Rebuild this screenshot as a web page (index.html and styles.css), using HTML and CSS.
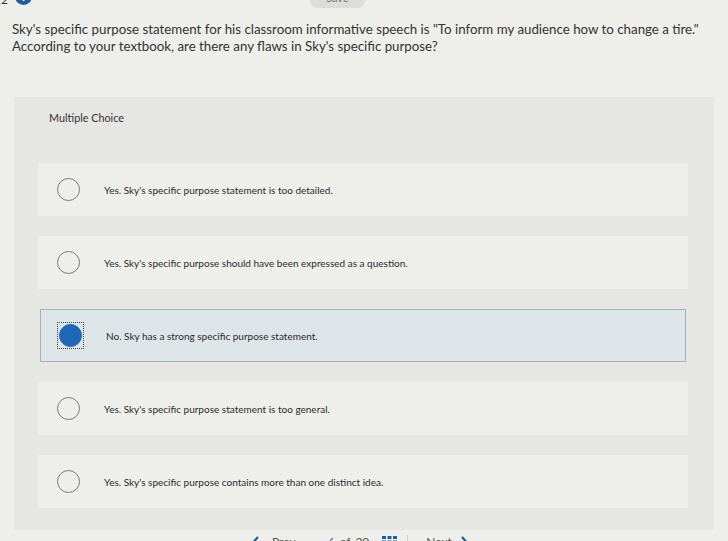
FILE: index.html
```html
<!DOCTYPE html>
<html lang="en">
<head>
<meta charset="utf-8">
<link rel="stylesheet" href="styles.css">
</head>
<body>
<div class="topbar">
  <span class="qnum">12</span>
  <span class="info">i</span>
  <span class="save">Save</span>
</div>
<div class="question">
  <p>Sky's specific purpose statement for his classroom informative speech is "To inform my audience how to change a tire."</p>
  <p>According to your textbook, are there any flaws in Sky's specific purpose?</p>
</div>
<div class="mc">
  <div class="mc-label">Multiple Choice</div>
  <div class="options">
    <div class="opt"><span class="radio"></span><span class="txt">Yes. Sky's specific purpose statement is too detailed.</span></div>
    <div class="opt"><span class="radio"></span><span class="txt">Yes. Sky's specific purpose should have been expressed as a question.</span></div>
    <div class="opt selected"><span class="focus"><span class="radio"></span></span><span class="txt">No. Sky has a strong specific purpose statement.</span></div>
    <div class="opt"><span class="radio"></span><span class="txt">Yes. Sky's specific purpose statement is too general.</span></div>
    <div class="opt"><span class="radio"></span><span class="txt">Yes. Sky's specific purpose contains more than one distinct idea.</span></div>
  </div>
</div>
<div class="nav">
  <svg class="chev" width="8" height="12" viewBox="0 0 8 12"><polyline points="6,1 1.5,6 6,11" fill="none" stroke="#1d5fa6" stroke-width="2.2"/></svg>
  <span class="prev">Prev</span>
  <span class="page"><b>6</b> of 20</span>
  <svg class="grid" width="15" height="12" viewBox="0 0 15 12">
    <rect x="0" y="0" width="4" height="3" fill="#1d5fa6"/><rect x="5.5" y="0" width="4" height="3" fill="#1d5fa6"/><rect x="11" y="0" width="4" height="3" fill="#1d5fa6"/>
    <rect x="0" y="4.5" width="4" height="3" fill="#1d5fa6"/><rect x="5.5" y="4.5" width="4" height="3" fill="#1d5fa6"/><rect x="11" y="4.5" width="4" height="3" fill="#1d5fa6"/>
    <rect x="0" y="9" width="4" height="3" fill="#1d5fa6"/><rect x="5.5" y="9" width="4" height="3" fill="#1d5fa6"/><rect x="11" y="9" width="4" height="3" fill="#1d5fa6"/>
  </svg>
  <span class="sep"></span>
  <span class="next">Next</span>
  <svg class="chev" width="8" height="12" viewBox="0 0 8 12"><polyline points="2,1 6.5,6 2,11" fill="none" stroke="#1d5fa6" stroke-width="2.2"/></svg>
</div>
</body>
</html>
```
FILE: styles.css
```css
html, body {
  margin: 0;
  padding: 0;
}
body {
  background: #eeeeea;
  font-family: Lato, "Open Sans", sans-serif;
  color: #2f2f2f;
  width: 728px;
  height: 541px;
  overflow: hidden;
}
.topbar {
  height: 8px;
  display: flex;
  align-items: flex-end;
  overflow: hidden;
}
.qnum {
  font-size: 12px;
  line-height: 12px;
  margin-left: -6px;
  margin-bottom: 2px;
  color: #333;
}
.info {
  width: 17px;
  height: 17px;
  border-radius: 50%;
  background: #1f5e9e;
  color: #fff;
  font-size: 12px;
  font-weight: bold;
  text-align: center;
  line-height: 17px;
  margin-left: 7px;
  margin-bottom: 3px;
}
.save {
  margin-left: 278px;
  width: 55px;
  height: 20px;
  border-radius: 8px;
  background: #dcdcd8;
  color: #777;
  font-size: 11px;
  text-align: center;
  line-height: 20px;
}
.question {
  padding: 13px 12px 0;
  font-size: 13.3px;
  line-height: 17px;
  color: #333;
}
.question p {
  margin: 0;
}
.mc {
  margin: 42px 14px 0;
  width: 700px;
  background: #e6e6e2;
  padding: 14px 0 22px;
}
.mc-label {
  font-size: 10.8px;
  line-height: 14px;
  padding-left: 35px;
  color: #333;
}
.options {
  margin: 38px 26px 0 24px;
  display: flex;
  flex-direction: column;
  gap: 20px;
}
.opt {
  height: 53px;
  box-sizing: border-box;
  background: #eeeeeb;
  display: flex;
  align-items: center;
  padding-left: 19px;
  gap: 24px;
}
.radio {
  width: 23px;
  height: 23px;
  box-sizing: border-box;
  border: 1.5px solid #7a7a7a;
  border-radius: 50%;
  flex: none;
  display: block;
}
.txt {
  font-size: 10px;
  color: #2b2b2b;
}
.opt.selected {
  background: #dde5e8;
  border: 1px solid #a2b2c0;
  padding-left: 16px;
  margin-left: 2px;
  margin-right: 2px;
  gap: 22px;
}
.focus {
  border: 1px dotted #444;
  padding: 1px;
  flex: none;
}
.opt.selected .radio {
  background: #1f68b5;
  border-color: #1f68b5;
}
.nav {
  margin-top: 4px;
  display: flex;
  align-items: center;
  padding-left: 252px;
  font-size: 12px;
  line-height: 16px;
  color: #555;
}
.prev {
  margin-left: 12px;
}
.page {
  margin-left: 32px;
  word-spacing: 2px;
}
.page b {
  color: #1d5fa6;
  font-weight: normal;
}
.grid {
  margin-left: 13px;
}
.sep {
  width: 1px;
  height: 14px;
  background: #cfcfcc;
  margin-left: 10px;
}
.next {
  margin-left: 18px;
  margin-right: 8px;
}
```
